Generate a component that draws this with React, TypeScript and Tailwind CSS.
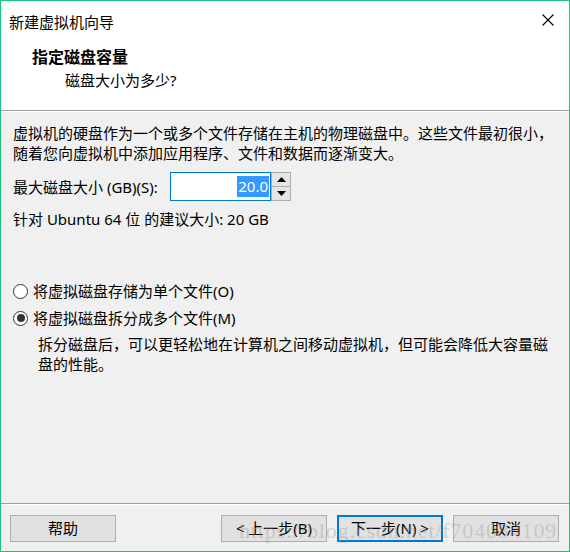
import * as React from 'react';

const font = { fontFamily: '"Noto Sans", "Noto Sans CJK SC", sans-serif' };

function WizButton({ label, primary }: { label: string; primary?: boolean }) {
  return (
    <div
      className={
        'flex h-[27px] w-[106px] items-center justify-center bg-[#e1e1e1] text-[15px] leading-none text-black ' +
        (primary ? 'border-2 border-[#0078d7]' : 'border border-[#adadad]')
      }
    >
      {label}
    </div>
  );
}

function Radio({ checked, label }: { checked?: boolean; label: string }) {
  return (
    <div className="flex h-[20px] items-center">
      <span className="ml-[12px] flex h-[15px] w-[15px] items-center justify-center rounded-full border border-[#333333] bg-white">
        {checked && <span className="h-[8px] w-[8px] rounded-full bg-[#333333]" />}
      </span>
      <span className="ml-[5px]">{label}</span>
    </div>
  );
}

export default function App() {
  return (
    <div
      style={font}
      className="relative flex h-[552px] w-[570px] flex-col overflow-hidden border border-[#1bc47d] bg-[#f0f0f0] text-[15px] text-black"
    >
      {/* Header */}
      <div className="h-[109px] bg-white">
        <div className="flex h-[42px] items-center justify-between pl-[8px] pr-[15px]">
          <span className="leading-none">新建虚拟机向导</span>
          <svg width="12" height="12" viewBox="0 0 12 12" className="mt-[-4px]">
            <path d="M0.5 0.5 L11.5 11.5 M11.5 0.5 L0.5 11.5" stroke="#000" strokeWidth="1.1" fill="none" />
          </svg>
        </div>
        <div className="mt-[3px] pl-[31px] text-[16px] font-bold leading-[23px]">指定磁盘容量</div>
        <div className="pl-[64px] leading-[23px]">磁盘大小为多少?</div>
      </div>
      <div className="h-px bg-[#a0a0a0]" />
      <div className="h-px bg-white" />

      {/* Body */}
      <div className="flex-1 pl-[12px] pt-[11px] leading-[20px]">
        <p>虚拟机的硬盘作为一个或多个文件存储在主机的物理磁盘中。这些文件最初很小，</p>
        <p>随着您向虚拟机中添加应用程序、文件和数据而逐渐变大。</p>

        <div className="mt-[9px] flex h-[29px] items-center">
          <span className="w-[157px]">最大磁盘大小 (GB)(S):</span>
          <div className="flex h-[29px] w-[101px] items-center justify-end border border-[#0078d7] bg-white pr-[1px]">
            <span className="bg-[#3399ff] px-[1px] leading-[21px] text-white">20.0</span>
          </div>
          <div className="flex h-[29px] w-[20px] flex-col border border-[#adadad] bg-[#f0f0f0]">
            <div className="flex flex-1 items-center justify-center border-b border-[#adadad] bg-[#e5e5e5]">
              <svg width="9" height="5" viewBox="0 0 9 5">
                <path d="M0 5 L4.5 0 L9 5 Z" fill="#000" />
              </svg>
            </div>
            <div className="flex flex-1 items-center justify-center bg-[#e5e5e5]">
              <svg width="9" height="5" viewBox="0 0 9 5">
                <path d="M0 0 L9 0 L4.5 5 Z" fill="#000" />
              </svg>
            </div>
          </div>
        </div>

        <p className="mt-[8px]">针对 Ubuntu 64 位 的建议大小: 20 GB</p>

        <div className="-ml-[12px] mt-[52px]">
          <Radio label="将虚拟磁盘存储为单个文件(O)" />
          <div className="mt-[7px]">
            <Radio checked label="将虚拟磁盘拆分成多个文件(M)" />
          </div>
        </div>
        <div className="mt-[6px] pl-[25px]">
          <p>拆分磁盘后，可以更轻松地在计算机之间移动虚拟机，但可能会降低大容量磁</p>
          <p>盘的性能。</p>
        </div>
      </div>

      {/* Footer */}
      <div className="h-[48px]">
        <div className="h-px bg-[#a0a0a0]" />
        <div className="h-px bg-white" />
        <div className="flex items-start justify-between pl-[9px] pr-[10px] pt-[10px]">
          <WizButton label="帮助" />
          <div className="flex gap-[10px]">
            <WizButton label="< 上一步(B)" />
            <WizButton primary label="下一步(N) >" />
            <WizButton label="取消" />
          </div>
        </div>
      </div>

      {/* Watermark */}
      <div
        style={{ fontFamily: '"Liberation Serif", serif' }}
        className="pointer-events-none absolute left-[238px] top-[519px] text-[22px] leading-[22px] tracking-[0.85px] text-[#9a9a9a]/40"
      >
        https://blog.csdn.net/f704084109
      </div>
    </div>
  );
}
